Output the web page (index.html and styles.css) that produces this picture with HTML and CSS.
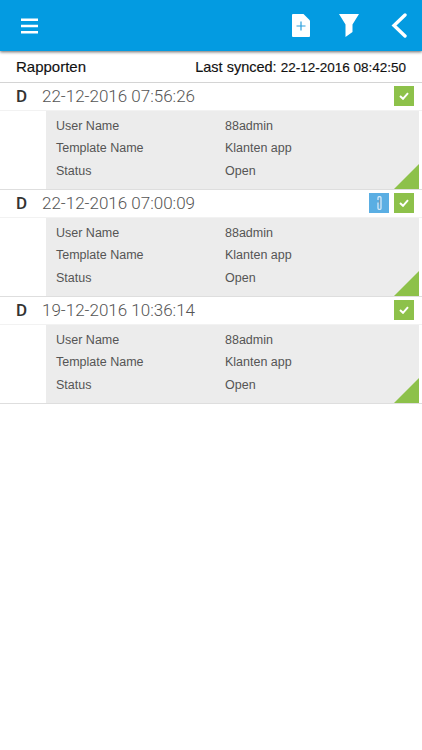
FILE: index.html
```html
<!DOCTYPE html>
<html lang="en">
  <head>
    <meta charset="UTF-8" />
    <meta name="viewport" content="width=device-width, initial-scale=1.0" />
    <title>Rapporten</title>
    <link rel="stylesheet" href="styles.css">
  </head>
  <body>
    <header class="topbar">
      <svg class="icon-menu" width="19" height="16" viewBox="0 0 19 16">
        <path d="M1 1.700h17M1 8h17M1 14.300h17" stroke="#fff" stroke-width="2.400" fill="none" />
      </svg>
      <div class="topbar-right">
        <svg width="18" height="23" viewBox="0 0 18 23">
          <path d="M1 0h10.500L18 6.500V22a1 1 0 0 1-1 1H1a1 1 0 0 1-1-1V1a1 1 0 0 1 1-1z" fill="#fff" />
          <path d="M9 7.500v9M4.500 12h9" stroke="#2a9fdd" stroke-width="1.200" fill="none" />
        </svg>
        <svg width="20" height="23" viewBox="0 0 20 23">
          <path d="M0 0h20l-6.500 10.500V18L6.500 23V10.500z" fill="#fff" />
        </svg>
        <svg width="19" height="25" viewBox="0 0 19 25">
          <path d="M17 2L6 12.500 17 23" stroke="#fff" stroke-width="3.400" fill="none" stroke-linecap="round" />
        </svg>
      </div>
    </header>

    <div class="subbar">
      <span class="subbar-title">Rapporten</span>
      <span class="subbar-sync">Last synced: <b>22-12-2016 08:42:50</b></span>
    </div>

    <section class="report">
      <div class="report-head">
        <span class="report-letter">D</span>
        <span class="report-date">22-12-2016 07:56:26</span>
        <span class="badge badge-check">
          <svg width="10" height="8" viewBox="0 0 10 8"><path d="M1 4l3 2.800L9 1.200" stroke="#fff" stroke-width="2" fill="none" /></svg>
        </span>
      </div>
      <div class="report-body">
        <div class="field"><span class="field-label">User Name</span><span>88admin</span></div>
        <div class="field"><span class="field-label">Template Name</span><span>Klanten app</span></div>
        <div class="field"><span class="field-label">Status</span><span>Open</span></div>
        <span class="corner"></span>
      </div>
    </section>

    <section class="report">
      <div class="report-head">
        <span class="report-letter">D</span>
        <span class="report-date">22-12-2016 07:00:09</span>
        <span class="badge badge-clip">
          <svg width="7" height="14" viewBox="0 0 7 14">
            <path d="M2 4V1.800a1.500 1.200 0 0 1 3 0v10.400a1.500 1.200 0 0 1-3 0V6.500" stroke="#d5e9f7" stroke-width="1.300" fill="none" />
            <path d="M3.500 3.500v5" stroke="#7d98ad" stroke-width="1" fill="none" />
          </svg>
        </span>
        <span class="badge badge-check">
          <svg width="10" height="8" viewBox="0 0 10 8"><path d="M1 4l3 2.800L9 1.200" stroke="#fff" stroke-width="2" fill="none" /></svg>
        </span>
      </div>
      <div class="report-body">
        <div class="field"><span class="field-label">User Name</span><span>88admin</span></div>
        <div class="field"><span class="field-label">Template Name</span><span>Klanten app</span></div>
        <div class="field"><span class="field-label">Status</span><span>Open</span></div>
        <span class="corner"></span>
      </div>
    </section>

    <section class="report">
      <div class="report-head">
        <span class="report-letter">D</span>
        <span class="report-date">19-12-2016 10:36:14</span>
        <span class="badge badge-check">
          <svg width="10" height="8" viewBox="0 0 10 8"><path d="M1 4l3 2.800L9 1.200" stroke="#fff" stroke-width="2" fill="none" /></svg>
        </span>
      </div>
      <div class="report-body">
        <div class="field"><span class="field-label">User Name</span><span>88admin</span></div>
        <div class="field"><span class="field-label">Template Name</span><span>Klanten app</span></div>
        <div class="field"><span class="field-label">Status</span><span>Open</span></div>
        <span class="corner"></span>
      </div>
    </section>
  </body>
</html>
```

FILE: styles.css
```css
* {
  margin: 0;
  padding: 0;
  box-sizing: border-box;
}
body {
  font-family: "Liberation Sans", Arial, sans-serif;
  background: #fff;
  color: #333;
  min-height: 100vh;
}

.topbar {
  height: 51px;
  background: #039be1;
  box-shadow: 0 1px 3px rgba(0, 0, 0, 0.6);
  display: flex;
  align-items: center;
  justify-content: space-between;
  padding: 0 15px 0 20px;
  position: relative;
}
.topbar-right {
  display: flex;
  align-items: center;
  gap: 29px;
}

.subbar {
  height: 32px;
  border-bottom: 1px solid #d4d4d4;
  display: flex;
  align-items: center;
  justify-content: space-between;
  padding: 0 16px;
  color: #111;
  font-size: 15px;
  -webkit-text-stroke: 0.15px #111;
}
.subbar-sync {
  font-size: 14.500px;
}
.subbar-sync b {
  font-weight: normal;
  font-size: 13.500px;
}

.report {
  height: 107px;
  border-bottom: 1px solid #dedede;
}
.report-head {
  height: 28px;
  display: flex;
  align-items: center;
  padding: 0 8px 1px 16px;
  gap: 5px;
  border-bottom: 1px solid #f2f2f2;
}
.report-letter {
  width: 21px;
  font-family: Roboto, sans-serif;
  font-weight: 500;
  font-size: 17px;
  color: #333;
}
.report-date {
  font-family: Roboto, sans-serif;
  font-weight: 300;
  font-size: 17px;
  color: #555;
  flex: 1;
}
.badge {
  width: 20px;
  height: 20px;
  margin-top: -1px;
  display: flex;
  align-items: center;
  justify-content: center;
}
.badge-check {
  background: #8dc14a;
}
.badge-clip {
  background: #5aaee3;
}

.report-body {
  height: 78px;
  margin-left: 46px;
  margin-right: 3px;
  background: #ececec;
  padding: 3.500px 10px;
  font-size: 12.500px;
  color: #555;
  position: relative;
}
.field {
  display: flex;
  height: 22.500px;
  align-items: center;
}
.field-label {
  width: 169px;
}
.corner {
  position: absolute;
  right: 0;
  bottom: 0;
  width: 0;
  height: 0;
  border-style: solid;
  border-width: 0 0 25px 25px;
  border-color: transparent transparent #8dc14a transparent;
}
```
